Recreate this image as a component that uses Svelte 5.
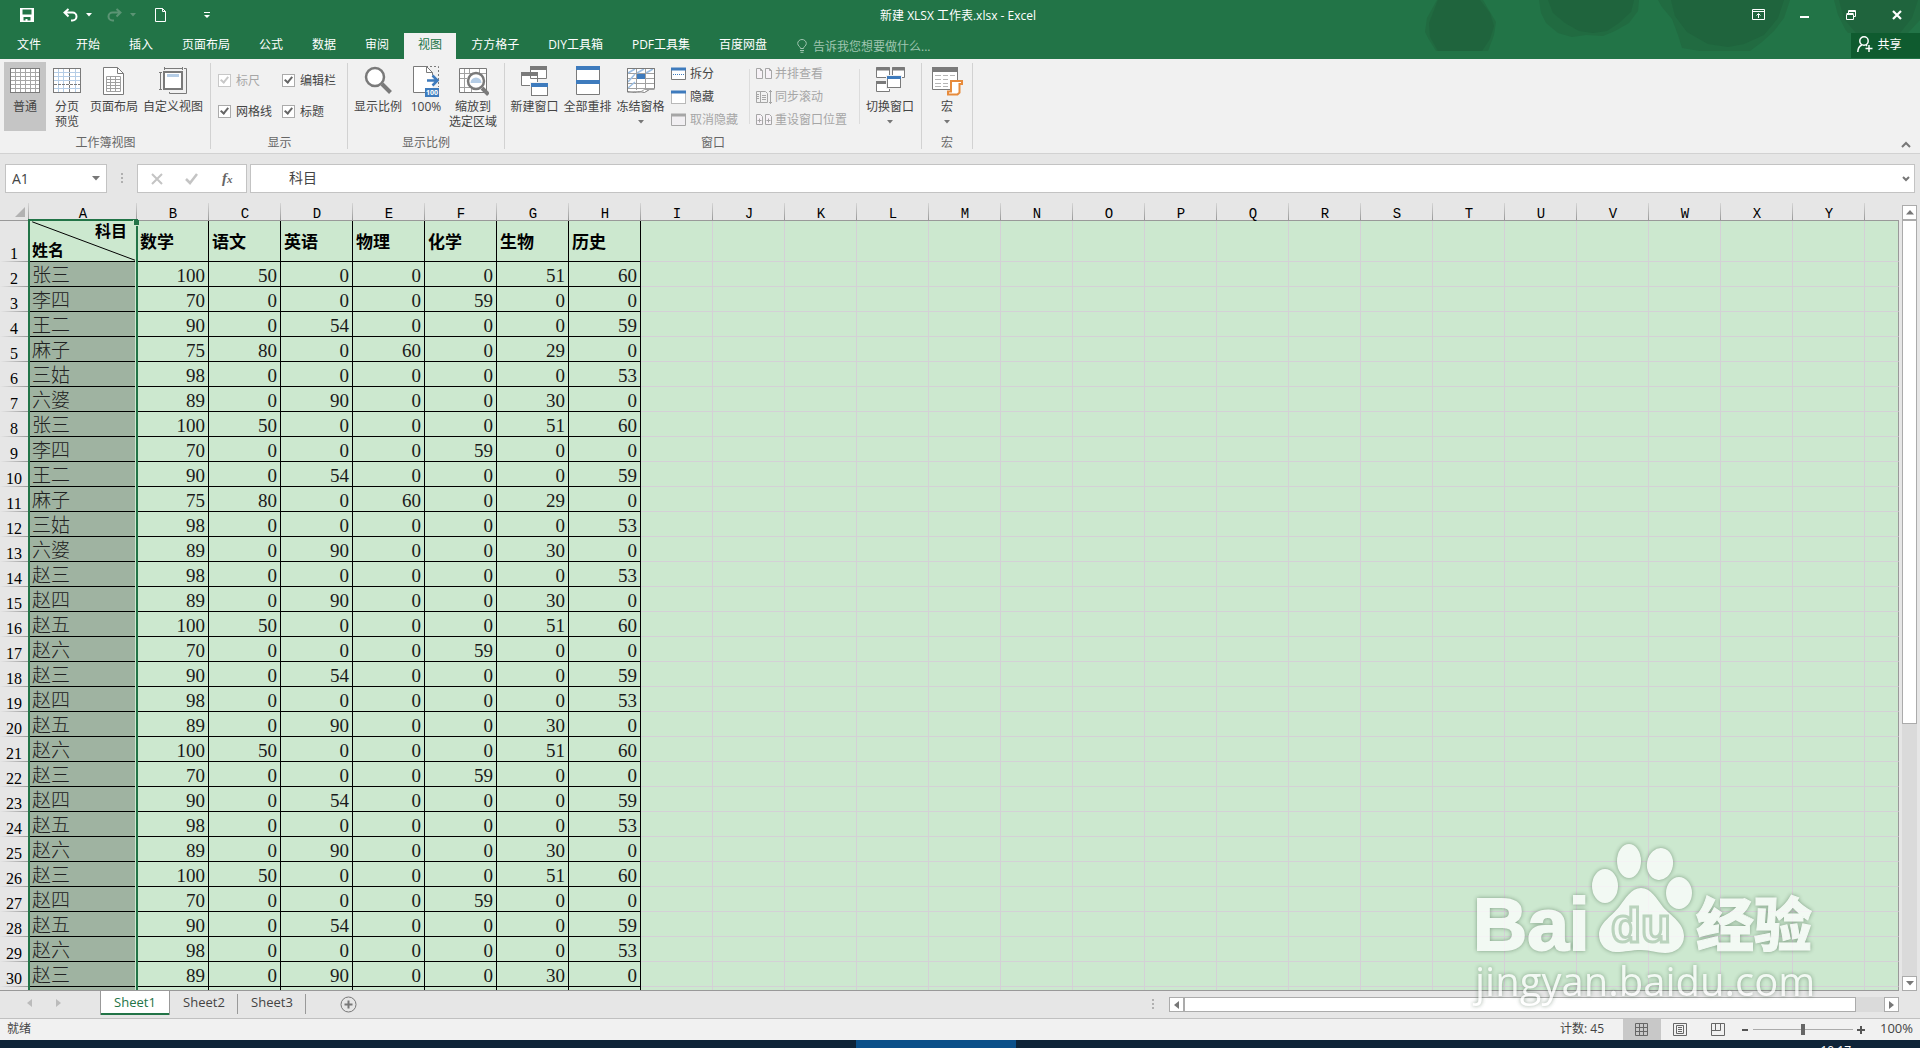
<script>
  /**
   * Spreadsheet window: title bar, "view" ribbon, formula bar, sheet,
   * sheet tabs and status bar.
   */
  const tabsBefore = ['开始', '插入', '页面布局', '公式', '数据', '审阅', '视图', '方方格子', 'DIY工具箱', 'PDF工具集', '百度网盘'];
  const sheets = ['Sheet1', 'Sheet2', 'Sheet3'];
  const columns = 'ABCDEFGHIJKLMNOPQRSTUVWXY'.split('');
  const subjects = ['数学', '语文', '英语', '物理', '化学', '生物', '历史'];

  const scores = [
    [100, 50, 0, 0, 0, 51, 60],
    [70, 0, 0, 0, 59, 0, 0],
    [90, 0, 54, 0, 0, 0, 59],
    [75, 80, 0, 60, 0, 29, 0],
    [98, 0, 0, 0, 0, 0, 53],
    [89, 0, 90, 0, 0, 30, 0],
  ];
  const names = ['张三', '李四', '王二', '麻子', '三姑', '六婆'];
  const zhao = ['赵三', '赵四', '赵五', '赵六'];
  const zhaoOrder = [4, 5, 0, 1, 2];

  const rows = [
    ...[...names, ...names].map((name, i) => ({ name, values: scores[i % 6] })),
    ...Array.from({ length: 17 }, (_, i) => ({
      name: zhao[i % 4],
      values: scores[zhaoOrder[i % 5]],
    })),
  ];

  let activeTab = $state('视图');
  let activeSheet = $state('Sheet1');
  let cellName = $state('A1');
  let formula = $state('科目');
  let zoom = $state(50);
</script>

{#snippet caret()}
  <svg class="caret" width="6" height="4" viewBox="0 0 6 4"><path d="M0 0h6L3 3.5z" fill="currentColor" /></svg>
{/snippet}

{#snippet icon(name)}
  <svg class="icon" width="32" height="32" viewBox="0 0 32 32" fill="none" stroke="#7a7a7a">
    {#if name === 'normal'}
      <rect x="1.5" y="3.5" width="29" height="24" fill="#fff" />
      <path d="M6.5 4v23M11.5 4v23M16.500 4v23M21.500 4v23M26.500 4v23M2 7.500h28M2 11.500h28M2 15.500h28M2 19.500h28M2 23.500h28" stroke="#a6a6a6" />
      <rect x="1.5" y="3.500" width="29" height="24" />
    {:else if name === 'breaks'}
      <rect x="2.5" y="3.5" width="27" height="24" fill="#fff" />
      <path d="M7.5 4v23M12.500 4v23M24.500 4v23M3 7.500h26M3 11.500h26M3 15.500h26M3 23.500h26" stroke="#b5cde6" />
      <path d="M18.500 4v23M3 19.500h26" stroke-dasharray="3 1" />
      <rect x="2.5" y="3.500" width="27" height="24" />
    {:else if name === 'layout'}
      <path d="M5.500 2.500h14l6 6v21h-20z" fill="#fff" />
      <path d="M19.500 2.500v6h6" />
      <path d="M8.500 11.500h14v15h-14zM8.500 14.500h14M8.500 17.500h14M8.500 20.500h14M8.500 23.500h14M12.500 12v14M17.500 12v14" stroke="#a0a0a0" />
    {:else if name === 'custom'}
      <path d="M7.500 3.500h18M7.500 2v3M25.500 2v3M3.500 7v17M2 7.500h3M2 24.500h3M27 3.500h2.500v25h-17V27" />
      <rect x="7" y="7" width="18" height="17" fill="#fff" stroke-width="2" />
      <path d="M10 10.500h12" stroke="#b5cde6" stroke-width="3" />
    {:else if name === 'zoom'}
      <circle cx="13" cy="12" r="9" fill="#fff" stroke-width="2.500" />
      <path d="M20 19l8.500 8.500" stroke-width="4" />
    {:else if name === 'hundred'}
      <path d="M16 1.500h12.500V22" stroke-dasharray="2 2" />
      <path d="M3.500 1.500h13l6 6v20.500h-19z" fill="#fff" stroke="none" />
      <path d="M15 27.500H3.500v-26h13l6 6v3M16.500 1.500v6h6" />
      <path d="M17 15.500h9M22.500 10.500l5 5-5 5" stroke="#3e7bbd" stroke-width="2.500" />
      <rect x="15" y="23" width="14" height="9" fill="#3e7bbd" stroke="none" />
      <text x="16" y="30" font-size="7" font-weight="700" fill="#fff" stroke="none">100</text>
    {:else if name === 'zoomsel'}
      <path d="M2.500 3.500h27v24h-27z" fill="#fff" />
      <path d="M7.500 4v23M12.500 4v5M22.500 4v5M3 8.500h26M3 13.500h7M3 22.500h10M14.500 22v5" stroke="#a0a0a0" />
      <circle cx="19" cy="16" r="8" fill="#fff" stroke-width="2.500" />
      <path d="M13.500 18a5.500 5.500 0 1 1 11 0z" fill="#b5cde6" stroke="none" />
      <path d="M25 23l6.500 6.500" stroke-width="4" />
    {:else if name === 'newwin'}
      <path d="M11.500 1.500h16v12h-16zM2.500 7.500h16v13h-16z" fill="#fff" />
      <path d="M11 3h17M2 9h17" stroke-width="4" />
      <rect x="11.500" y="17.500" width="18" height="14" fill="#fff" stroke="#f1f1f1" />
      <rect x="12.500" y="18.500" width="16" height="12" fill="#fff" />
      <path d="M12 20h17" stroke="#3e7bbd" stroke-width="4" />
    {:else if name === 'arrange'}
      <path d="M4.500 2.500h23v27h-23z" fill="#fff" />
      <path d="M4 3h24M4 17h24" stroke="#3e7bbd" stroke-width="4" />
    {:else if name === 'freeze'}
      <path d="M2.500 3.500h27v20l-5 1-5 3-5-1-5 1-7-1z" fill="#fff" />
      <path d="M2.500 8.500h27M2.500 13.500h27M2.500 18.500h27M2.500 23.500h27M11.500 4v21M20.500 4v21M2.500 27.500l8-1 4 1 5-3h10" stroke="#a0a0a0" />
      <path d="M3 8l7-4M12 8l7-4M21 8l7-4M3 17l7-8M3 23l7-6" stroke="#9dbfe3" stroke-width="1.500" />
      <rect x="12" y="9" width="8" height="5" fill="#3e7bbd" stroke="none" />
      <path d="M2.500 27v-23.500h27V23" />
    {:else if name === 'switch'}
      <path d="M2.500 2.500h13v10h-13zM18.500 2.500h12v10h-12zM2.500 16.500h13v10h-13z" fill="#fff" />
      <path d="M2 4h14M18 4h13M2 17.500h14" stroke-width="3" />
      <rect x="12.500" y="10.500" width="15" height="13" fill="#fff" stroke="#f1f1f1" />
      <rect x="13.500" y="11.500" width="13" height="11" fill="#fff" />
      <path d="M13 12.500h14" stroke="#3e7bbd" stroke-width="3" />
    {:else if name === 'macro'}
      <path d="M1.500 2.500h25v22h-25z" fill="#fff" />
      <path d="M1 4.500h26" stroke-width="5" />
      <path d="M4 10.500h6M12 10.500h5M19 10.500h5M4 14.500h6M12 14.500h5M4 18.500h6M12 18.500h5M4 21.500h6M12 21.500h5" stroke="#b5b5b5" />
      <path d="M20 16h11v3h-2.500v8.500l-2 2H17v-3h3z" fill="#fff" stroke="#e78b3c" stroke-width="2" />
    {/if}
  </svg>
{/snippet}

{#snippet smallIcon(name)}
  <svg width="16" height="16" viewBox="0 0 16 16" fill="none" stroke="currentColor">
    {#if name === 'split'}
      <path d="M.5 2.500h14v11H.5z" fill="#fff" stroke="#7a7a7a" />
      <path d="M0 3h15" stroke="#3e7bbd" stroke-width="3" />
      <path d="M2 8.500h12" stroke="#3e7bbd" stroke-dasharray="1 1" />
    {:else if name === 'hide'}
      <path d="M.5 2.500h14v12H.5z" fill="#fff" stroke="#7a7a7a" stroke-dasharray="1 1" />
      <path d="M0 3h15" stroke="#3e7bbd" stroke-width="3" />
    {:else if name === 'unhide'}
      <path d="M.5 2.500h14v11H.5z" fill="#f1eff2" />
      <path d="M0 3h15" stroke-width="3" />
    {:else if name === 'side'}
      <path d="M.5 2.500h4l2 2v8h-6zM9.500 2.500h4l2 2v8h-6zM4.500 2.500v2h2M13.500 2.500v2h2" fill="#f7f2f7" />
    {:else if name === 'sync'}
      <path d="M.5 2.500h4v11h-4zM4.500 2.500h5l2 2v9h-7zM1 5.500h2M1 7.500h2M1 9.500h2M6 6.500h4M6 8.500h4M6 10.500h4" />
      <path d="M14.500 1v14M13 2.500h3M13 13.500h3" />
    {:else if name === 'reset'}
      <path d="M.5 2.500h4l2 2v8h-6zM9.500 2.500h4l2 2v8h-6zM1.500 8.500h4M10.500 8.500h4M3.500 6.500v4M12.500 6.500v4" fill="#f7f2f7" />
    {/if}
  </svg>
{/snippet}

{#snippet big(name, lines, width, arrow, pressed)}
  <button class="big" class:pressed style="width: {width}px">
    {@render icon(name)}
    <span class="lines">
      {#each lines as line}<span>{line}</span>{/each}
    </span>
    {#if arrow}{@render caret()}{/if}
  </button>
{/snippet}

{#snippet small(name, label, disabled)}
  <button class="small" {disabled}>{@render smallIcon(name)}{label}</button>
{/snippet}

<div class="window">
  <header class="top">
    <svg class="blobs" width="520" height="51" viewBox="0 0 520 51">
      <g fill="#216b41">
        <path d="M37 0h46l7 12 6 10-2 13-6 16H36L28 38l-3-6 2-14z" />
        <path d="M139 0h100l-1 11-9 12-14 8-12 5-17-1-14 2-14-4-12-10-5-10z" />
        <path d="M258 0h132l-6 18-10 13-12 11-12 9h-50l-18-3-4-13-6-16-10-12z" />
        <path d="M434 0h86v20l-12 13h-60l-3-4-7-14z" />
      </g>
      <g fill="#1f643d">
        <path d="M38 0h42l10 13 4 13-4 13-8 12H38l-8-14-1-14z" />
        <path d="M148 0h86l-3 12-12 11-12 8-14 2-14-2-14-8-12-10z" />
        <path d="M271 0h113l-6 18-14 17-20 9-16 3-20-3-21-12-12-16z" />
        <path d="M439 0h79l-6 18-12 15h-44l-12-14z" />
      </g>
    </svg>

    <div class="titlebar">
      <div class="quick">
        <button aria-label="保存">
          <svg width="14" height="14" viewBox="0 0 14 14"><path d="M0 0h14v14H0zM2.500 1.500v5h9v-5zM3.500 9v3.500h2V11h2v1.500h3V9z" fill="#fff" fill-rule="evenodd" /></svg>
        </button>
        <button class="undo" aria-label="撤消">
          <svg width="15" height="14" viewBox="0 0 15 14" fill="none" stroke="#fff" stroke-width="2"><path d="M5.500 1L1.500 4.500l4 4M2 4.500h7.500a3.800 3.800 0 0 1 0 8H8" /></svg>
          {@render caret()}
        </button>
        <button class="undo dim" aria-label="恢复" disabled>
          <svg width="15" height="14" viewBox="0 0 15 14" fill="none" stroke="currentColor" stroke-width="2"><path d="M9.500 1l4 3.500-4 4M13 4.500H5.500a3.800 3.800 0 0 0 0 8H7" /></svg>
          {@render caret()}
        </button>
        <button class="new" aria-label="新建">
          <svg width="12" height="14" viewBox="0 0 12 14" fill="none" stroke="#fff"><path d="M.5.5h7l3 3v10H.5zM7.500.5v3h3" /></svg>
        </button>
        <button aria-label="自定义快速访问工具栏">
          <svg width="6" height="6" viewBox="0 0 6 6" fill="#fff"><path d="M0 0h6v1H0zM0 3h6L3 6z" /></svg>
        </button>
      </div>
      <span class="title">新建 XLSX 工作表.xlsx - Excel</span>
      <div class="controls">
        <button aria-label="功能区显示选项">
          <svg width="14" height="12" viewBox="0 0 14 12" fill="none" stroke="#fff"><path d="M.5.5h12v10H.5zM1 2.500h11M6.500 9V5M4.500 6.500l2-2 2 2" /></svg>
        </button>
        <button aria-label="最小化">
          <svg width="10" height="12" viewBox="0 0 10 12"><path d="M0 7h9v2H0z" fill="#fff" /></svg>
        </button>
        <button aria-label="还原">
          <svg width="10" height="10" viewBox="0 0 10 10" fill="none" stroke="#fff"><path d="M.5 4.500h7v5h-7zM.5 3.500h7M2.500 3V.5h7v6H8M2.500 1.500h7" /></svg>
        </button>
        <button aria-label="关闭">
          <svg width="10" height="10" viewBox="0 0 10 10"><path d="M1 1l8 8M9 1L1 9" stroke="#fff" stroke-width="2.200" /></svg>
        </button>
      </div>
    </div>

    <nav class="tabs">
      <button class="tab file">文件</button>
      {#each tabsBefore as t}
        <button class="tab" class:active={activeTab === t} onclick={() => (activeTab = t)}>{t}</button>
      {/each}
      <button class="tell">
        <svg width="10" height="14" viewBox="0 0 10 14" fill="none" stroke="currentColor"><path d="M3.500 9.500C3.500 7.500.7 7 .7 4.500a4.300 4 0 0 1 8.600 0c0 2.500-2.800 3-2.800 5zM3 11.500h4M3.500 13.300h3" /></svg>
        告诉我您想要做什么...
      </button>
      <button class="share">
        <svg width="16" height="17" viewBox="0 0 16 17" fill="none" stroke="#fff" stroke-width="1.500"><circle cx="7" cy="5" r="4.200" /><path d="M.8 16c0-4 2-6 4-7M9 9l1 1M8.500 12.500h7M12 9v7" /></svg>
        共享
      </button>
    </nav>
  </header>

  <section class="ribbon">
    <div class="group views">
      <div class="tools">
        {@render big('normal', ['普通'], 42, false, true)}
        {@render big('breaks', ['分页', '预览'], 42)}
        {@render big('layout', ['页面布局'], 52)}
        {@render big('custom', ['自定义视图'], 66)}
      </div>
      <div class="caption">工作簿视图</div>
    </div>
    <div class="group show">
      <div class="tools checks">
        <label class="off"><input type="checkbox" checked disabled />标尺</label>
        <label><input type="checkbox" checked />编辑栏</label>
        <label><input type="checkbox" checked />网格线</label>
        <label><input type="checkbox" checked />标题</label>
      </div>
      <div class="caption">显示</div>
    </div>
    <div class="group scale">
      <div class="tools">
        {@render big('zoom', ['显示比例'], 52)}
        {@render big('hundred', ['100%'], 44)}
        {@render big('zoomsel', ['缩放到', '选定区域'], 50)}
      </div>
      <div class="caption">显示比例</div>
    </div>
    <div class="group win">
      <div class="tools">
        {@render big('newwin', ['新建窗口'], 53)}
        {@render big('arrange', ['全部重排'], 53)}
        {@render big('freeze', ['冻结窗格'], 53, true)}
        <div class="stack">
          {@render small('split', '拆分')}
          {@render small('hide', '隐藏')}
          {@render small('unhide', '取消隐藏', true)}
        </div>
        <div class="stack lined">
          {@render small('side', '并排查看', true)}
          {@render small('sync', '同步滚动', true)}
          {@render small('reset', '重设窗口位置', true)}
        </div>
        {@render big('switch', ['切换窗口'], 60, true)}
      </div>
      <div class="caption">窗口</div>
    </div>
    <div class="group macro">
      <div class="tools">
        {@render big('macro', ['宏'], 48, true)}
      </div>
      <div class="caption">宏</div>
    </div>
    <button class="collapse" aria-label="折叠功能区">
      <svg width="10" height="7" viewBox="0 0 10 7" fill="none" stroke="#777" stroke-width="2"><path d="M1 6l4-4 4 4" /></svg>
    </button>
  </section>

  <section class="formulabar">
    <div class="namebox">
      <input aria-label="名称框" bind:value={cellName} />
      <button aria-label="选择名称"><svg width="8" height="5" viewBox="0 0 8 5"><path d="M0 0h8L4 4.500z" fill="#777" /></svg></button>
    </div>
    <svg class="grip" width="2" height="11" viewBox="0 0 2 11"><path d="M0 0h2v2H0zM0 4h2v2H0zM0 8h2v2H0z" fill="#b0b0b0" /></svg>
    <div class="fx">
      <button aria-label="取消" disabled><svg width="12" height="12" viewBox="0 0 12 12"><path d="M1 1l10 10M11 1L1 11" stroke="#c4c4c4" stroke-width="2" /></svg></button>
      <button aria-label="输入" disabled><svg width="13" height="12" viewBox="0 0 13 12" fill="none"><path d="M1 6l4 4 7-9" stroke="#c4c4c4" stroke-width="2.500" /></svg></button>
      <button aria-label="插入函数"><i>f<small>x</small></i></button>
    </div>
    <div class="formula">
      <input aria-label="编辑栏" bind:value={formula} />
      <button aria-label="展开编辑栏"><svg width="8" height="6" viewBox="0 0 8 6" fill="none"><path d="M1 1l3 3 3-3" stroke="#777" stroke-width="2" /></svg></button>
    </div>
  </section>

  <main class="sheet">
    <div class="grid">
      <table>
        <colgroup>
          <col class="c-num" />
          <col class="c-a" />
          {#each columns.slice(1) as c (c)}<col class="c-std" />{/each}
          <col />
        </colgroup>
        <thead>
          <tr>
            <th class="corner"><svg width="10" height="10" viewBox="0 0 10 10"><path d="M10 0v10H0z" fill="#b2b2b2" /></svg></th>
            {#each columns as c (c)}<th>{c}</th>{/each}
            <th class="rest"></th>
          </tr>
        </thead>
        <tbody>
          <tr class="first">
            <th>1</th>
            <td class="data split">
              <div class="halves"><b>科目</b><b>姓名</b></div>
              <svg class="slash" viewBox="0 0 100 100" preserveAspectRatio="none"><path d="M3 2L100 99" stroke="#000" vector-effect="non-scaling-stroke" /></svg>
            </td>
            {#each subjects as s}<td class="data head">{s}</td>{/each}
            {#each columns.slice(8) as c (c)}<td></td>{/each}
            <td class="rest"></td>
          </tr>
          {#each rows as row, i}
            <tr>
              <th>{i + 2}</th>
              <td class="data name">{row.name}</td>
              {#each row.values as v}<td class="data num">{v}</td>{/each}
              {#each columns.slice(8) as c (c)}<td></td>{/each}
              <td class="rest"></td>
            </tr>
          {/each}
          <tr>
            <th></th>
            <td class="data name"></td>
            {#each subjects as s}<td class="data"></td>{/each}
            {#each columns.slice(8) as c (c)}<td></td>{/each}
            <td class="rest"></td>
          </tr>
        </tbody>
      </table>
      <div class="selection"></div>
    </div>
    <div class="vscroll">
      <button aria-label="向上滚动"><svg width="8" height="5" viewBox="0 0 8 5"><path d="M0 4.500h8L4 0z" fill="#777" /></svg></button>
      <div class="vtrack"><div class="thumb"></div></div>
      <button aria-label="向下滚动"><svg width="8" height="5" viewBox="0 0 8 5"><path d="M0 0h8L4 4.500z" fill="#777" /></svg></button>
    </div>
  </main>

  <section class="sheetbar">
    <div class="navs">
      <button aria-label="上一个工作表"><svg width="5" height="8" viewBox="0 0 5 8"><path d="M5 0v8L0 4z" fill="#bbb" /></svg></button>
      <button aria-label="下一个工作表"><svg width="5" height="8" viewBox="0 0 5 8"><path d="M0 0v8l5-4z" fill="#bbb" /></svg></button>
    </div>
    {#each sheets as s}
      <button class="sheettab" class:active={activeSheet === s} onclick={() => (activeSheet = s)}>{s}</button>
    {/each}
    <button class="add" aria-label="新工作表">
      <svg width="17" height="17" viewBox="0 0 17 17" fill="none" stroke="#777"><circle cx="8.500" cy="8.500" r="7.500" /><path d="M8.500 4.500v8M4.500 8.500h8" stroke-width="2" /></svg>
    </button>
    <div class="hscroll">
      <svg class="grip" width="2" height="11" viewBox="0 0 2 11"><path d="M0 0h2v2H0zM0 4h2v2H0zM0 8h2v2H0z" fill="#b0b0b0" /></svg>
      <button aria-label="向左滚动"><svg width="5" height="8" viewBox="0 0 5 8"><path d="M5 0v8L0 4z" fill="#777" /></svg></button>
      <div class="htrack"><div class="thumb"></div></div>
      <button aria-label="向右滚动"><svg width="5" height="8" viewBox="0 0 5 8"><path d="M0 0v8l5-4z" fill="#777" /></svg></button>
    </div>
  </section>

  <footer class="status">
    <span>就绪</span>
    <span class="count">计数: 45</span>
    <button class="mode on" aria-label="普通"><svg width="14" height="14" viewBox="0 0 14 14" fill="none" stroke="#666"><path d="M.5.5h12v12H.5zM4.500.5v12M8.500.5v12M.5 4.500h12M.5 8.500h12" /></svg></button>
    <button class="mode" aria-label="页面布局"><svg width="14" height="14" viewBox="0 0 14 14" fill="none" stroke="#666"><path d="M.5.5h13v12H.5zM3.500 2.500h7v8h-7zM5 4.500h4M5 6.500h4M5 8.500h4" /></svg></button>
    <button class="mode" aria-label="分页预览"><svg width="14" height="14" viewBox="0 0 14 14" fill="none" stroke="#666"><path d="M.5.5h13v12H.5zM4.500.5v7M9.500.5v7h-9" /></svg></button>
    <button class="step" aria-label="缩小"><svg width="8" height="8" viewBox="0 0 8 8"><path d="M1 3h6v2H1z" fill="#555" /></svg></button>
    <input type="range" aria-label="缩放" min="0" max="100" bind:value={zoom} />
    <button class="step" aria-label="放大"><svg width="8" height="8" viewBox="0 0 8 8"><path d="M0 3h3V0h2v3h3v2H5v3H3V5H0z" fill="#555" /></svg></button>
    <button class="percent">100%</button>
  </footer>

  <div class="taskbar">
    <span class="running"></span>
    <time>10:17</time>
  </div>

  <svg class="watermark" width="350" height="176" viewBox="0 0 350 176">
    <g class="wm-shadow" fill="#fff">
      <text class="wm-bold" x="3" y="110" font-size="75" stroke="#fff" stroke-width="2">Bai</text>
      <ellipse cx="135" cy="46" rx="13" ry="17" />
      <ellipse cx="159" cy="21" rx="12" ry="17" />
      <ellipse cx="190" cy="24" rx="13" ry="16" transform="rotate(10 190 24)" />
      <ellipse cx="209" cy="53" rx="13" ry="16" />
      <path d="M171 48C181 48 186 58 193 67C201 76 214 83 214 96C214 107 205 113 195 113C186 113 181 110 171 110C161 110 156 112 146 112C136 112 129 104 129 95C129 83 141 77 149 67C156 58 161 48 171 48z" />
      <text class="wm-bold" x="141" y="102" font-size="49" stroke="#b4cdb8" stroke-width="3">du</text>
      <text class="wm-cjk" x="226" y="106" font-size="58" stroke="#fff" stroke-width="1">经验</text>
      <text class="wm-url" x="5" y="156" font-size="40">jingyan.baidu.com</text>
    </g>
  </svg>
</div>

<style>
  :global(body) {
    margin: 0;
    overflow: hidden;
  }
  .window {
    position: relative;
    display: flex;
    flex-direction: column;
    height: 100vh;
    background: #e6e6e6;
    color: #444;
    font: 12px/15px "Open Sans", "Noto Sans CJK SC", sans-serif;
  }
  button,
  input {
    margin: 0;
    padding: 0;
    border: 0;
    border-radius: 0;
    background: none;
    color: inherit;
    font: inherit;
  }
  button {
    display: flex;
    align-items: center;
    justify-content: center;
    white-space: nowrap;
  }
  svg {
    display: block;
    flex: none;
  }

  /* title bar and tabs */
  .top {
    position: relative;
    background: #227447;
    color: #fff;
  }
  .blobs {
    position: absolute;
    top: 0;
    right: 0;
  }
  .titlebar {
    position: relative;
    display: flex;
    height: 33px;
  }
  .quick {
    flex: 1;
    display: flex;
    align-items: center;
    padding: 0 0 4px 20px;
  }
  .undo {
    gap: 8px;
    margin-left: 29px;
  }
  .undo + .undo {
    margin-left: 15px;
  }
  .dim {
    color: #5b9474;
  }
  .new {
    margin: 0 37px 0 19px;
  }
  .title {
    margin-right: 24px;
    padding-top: 8px;
  }
  .controls {
    flex: 1;
    display: flex;
    justify-content: flex-end;
  }
  .controls button {
    width: 46px;
    height: 30px;
  }
  .tabs {
    position: relative;
    display: flex;
    height: 26px;
    gap: 1px;
  }
  .tab {
    padding: 0 14px 3px;
  }
  .tab.file {
    padding: 0 17px 3px;
    margin-right: 3px;
  }
  .tab.active {
    background: #f1f1f1;
    color: #227447;
  }
  .tell {
    gap: 6px;
    padding-left: 15px;
    color: #9fc5b0;
  }
  .share {
    gap: 4px;
    width: 69px;
    height: 25px;
    margin-left: auto;
    padding: 0 12px 3px 0;
    background: #0f5b2f;
  }

  /* ribbon */
  .ribbon {
    display: flex;
    height: 94px;
    background: #f1f1f1;
    border-bottom: 1px solid #d2d2d2;
  }
  .group {
    position: relative;
    display: flex;
    flex-direction: column;
    box-sizing: border-box;
    padding-top: 3px;
  }
  .group::after {
    content: "";
    position: absolute;
    top: 4px;
    bottom: 4px;
    right: 0;
    width: 1px;
    background: #d2d2d2;
  }
  .views {
    width: 211px;
    padding-left: 4px;
    padding-right: 4px;
  }
  .show {
    width: 137px;
  }
  .scale {
    width: 157px;
    padding: 3px 5px 0 4px;
  }
  .win {
    width: 417px;
    padding: 3px 4px 0 3px;
  }
  .macro {
    width: 51px;
    padding: 3px 2px 0 1px;
  }
  .tools {
    display: flex;
    height: 69px;
  }
  .caption {
    padding-top: 4px;
    text-align: center;
    color: #666;
  }
  .big {
    flex: none;
    flex-direction: column;
    justify-content: flex-start;
    box-sizing: border-box;
    height: 69px;
    padding-top: 3px;
  }
  .pressed {
    background: #c5c5c5;
  }
  .lines {
    display: flex;
    flex-direction: column;
    margin-top: 2px;
  }
  .big .caret {
    margin-top: 6px;
    color: #777;
  }
  .checks {
    display: grid;
    grid-template-columns: 64px 64px;
    grid-template-rows: 31px 31px;
    padding: 3px 0 0 7px;
    height: 66px;
  }
  .checks label {
    display: flex;
    align-items: center;
    gap: 5px;
    white-space: nowrap;
  }
  .off {
    color: #a6a6a6;
  }
  .checks input {
    appearance: none;
    box-sizing: border-box;
    width: 13px;
    height: 13px;
    border: 1px solid #ababab;
    background: #fff;
  }
  .checks input:checked::after {
    content: "";
    display: block;
    box-sizing: border-box;
    width: 5px;
    height: 8px;
    margin: 0 3px;
    border: solid #666;
    border-width: 0 2px 2px 0;
    transform: rotate(40deg);
  }
  .checks input:disabled {
    border-color: #c8c8c8;
  }
  .checks input:disabled::after {
    border-color: #c8c8c8;
  }
  .stack {
    display: flex;
    flex: none;
    flex-direction: column;
    align-items: flex-start;
    box-sizing: border-box;
    width: 82px;
    padding-left: 4px;
  }
  .lined {
    width: 111px;
    height: 62px;
    padding-left: 7px;
    position: relative;
  }
  .lined::before,
  .lined::after {
    content: "";
    position: absolute;
    top: 7px;
    bottom: 0;
    left: 0;
    width: 1px;
    background: #dcdcdc;
  }
  .lined::after {
    right: 0;
    left: auto;
  }
  .small {
    flex: none;
    gap: 3px;
    height: 23px;
  }
  .small:disabled {
    color: #a6a6a6;
  }
  .collapse {
    align-self: flex-end;
    width: 20px;
    height: 17px;
    margin: 0 4px 0 auto;
  }

  /* formula bar */
  .formulabar {
    display: flex;
    align-items: center;
    padding: 10px 5px;
    font-size: 14px;
  }
  .namebox,
  .fx,
  .formula {
    display: flex;
    box-sizing: border-box;
    height: 29px;
    border: 1px solid #c3c3c3;
    background: #fff;
  }
  .namebox {
    width: 102px;
  }
  .namebox input {
    flex: 1;
    min-width: 0;
    padding-left: 6px;
  }
  .namebox button {
    width: 20px;
  }
  .formulabar .grip {
    margin: 0 14px;
  }
  .fx {
    width: 110px;
    padding: 0 1px;
  }
  .fx button {
    flex: 1;
  }
  .fx i {
    color: #666;
    font: italic 700 15px "Liberation Serif", serif;
  }
  .fx small {
    font-size: 11px;
  }
  .formula {
    flex: 1;
    margin-left: 3px;
  }
  .formula input {
    flex: 1;
    min-width: 0;
    padding: 0 0 2px 38px;
  }
  .formula button {
    width: 17px;
  }

  /* sheet */
  .sheet {
    flex: 1;
    display: flex;
    min-height: 0;
  }
  .grid {
    position: relative;
    flex: 1;
    min-width: 0;
    overflow: hidden;
    border-bottom: 1px solid #999;
  }
  table {
    width: 100%;
    table-layout: fixed;
    border-collapse: separate;
    border-spacing: 0;
    color: #000;
    font: 19px/21px "Liberation Serif", "Noto Sans CJK SC", serif;
  }
  .c-num {
    width: 29px;
  }
  .c-a {
    width: 108px;
  }
  .c-std {
    width: 72px;
  }
  th,
  td {
    box-sizing: border-box;
    height: 25px;
    padding: 0;
    vertical-align: bottom;
    white-space: nowrap;
  }
  th {
    background: linear-gradient(90deg, #e6e6e6, #999) bottom / 100% 1px no-repeat;
    border-right: 1px solid #999;
    font-weight: 400;
    font-size: 16px;
    line-height: 17px;
  }
  thead th {
    height: 18px;
    border-right: 0;
    border-bottom: 1px solid #999;
    background: linear-gradient(#d6d6d6, #999) right / 1px 100% no-repeat;
    font-family: "Liberation Mono", monospace;
    font-size: 14px;
    line-height: 12px;
  }
  .corner svg {
    margin: 0 0 3px 15px;
  }
  thead .rest {
    background: none;
  }
  td {
    background: #cce8cf;
    border: solid #d4d0d6;
    border-width: 0 1px 1px 0;
  }
  td.rest {
    border-right-color: #999;
  }
  .data {
    border-color: #000;
  }
  .first th,
  .first td {
    height: 41px;
  }
  .first .head {
    padding: 2px 0 0 3px;
    vertical-align: middle;
    font-size: 17px;
    font-weight: 700;
  }
  .split {
    position: relative;
  }
  .halves {
    display: flex;
    flex-direction: column;
    justify-content: space-between;
    box-sizing: border-box;
    height: 40px;
    padding: 2px 9px 1px 3px;
    font-size: 16px;
    line-height: 18px;
  }
  .halves b:first-child {
    align-self: flex-end;
  }
  .slash {
    position: absolute;
    inset: 0;
    width: 100%;
    height: 100%;
  }
  .name {
    padding-left: 3px;
    background: #9fb3a1;
    color: #222;
    font-weight: 300;
  }
  .num {
    padding-right: 3px;
    text-align: right;
    color: #1a1a1a;
  }
  .selection {
    position: absolute;
    top: 16px;
    left: 28px;
    bottom: -4px;
    width: 106px;
    border: 2px solid #227447;
    box-shadow: inset -1px 0 #cce8cf;
  }
  .selection::after {
    content: "";
    position: absolute;
    top: -1px;
    right: -3px;
    width: 5px;
    height: 5px;
    background: #227447;
    border: solid #cce8cf;
    border-width: 0 0 1px 1px;
  }

  /* scroll bars */
  .vscroll {
    display: flex;
    flex-direction: column;
    width: 15px;
    margin: 2px 3px 0;
  }
  .vscroll button,
  .hscroll button {
    flex: none;
    box-sizing: border-box;
    width: 15px;
    height: 15px;
    border: 1px solid #ababab;
    background: #fff;
  }
  .vtrack {
    flex: 1;
    background: #dadada;
  }
  .thumb {
    box-sizing: border-box;
    border: 1px solid #ababab;
    background: #fff;
  }
  .vtrack .thumb {
    height: 66.7%;
  }
  .sheetbar {
    display: flex;
    height: 27px;
    border-bottom: 1px solid #c0c0c0;
    font-size: 13px;
  }
  .navs {
    display: flex;
    width: 100px;
    padding-left: 15px;
    box-sizing: border-box;
  }
  .navs button {
    width: 29px;
    height: 24px;
  }
  .sheettab {
    position: relative;
    width: 68px;
    height: 24px;
    padding-bottom: 2px;
  }
  .sheettab::after {
    content: "";
    position: absolute;
    top: 3px;
    right: 0;
    width: 1px;
    height: 20px;
    background: #999;
  }
  .sheettab.active {
    box-sizing: border-box;
    width: 70px;
    border: solid #999;
    border-width: 0 1px;
    background: #fff;
    box-shadow: inset 0 -2px #227447;
    color: #227447;
  }
  .sheettab.active::after {
    display: none;
  }
  .add {
    width: 84px;
    height: 26px;
  }
  .hscroll {
    display: flex;
    align-items: center;
    width: 747px;
    height: 27px;
    margin: 0 21px 0 auto;
  }
  .hscroll .grip {
    margin-right: 15px;
  }
  .htrack {
    flex: 1;
    height: 15px;
    background: #dadada;
  }
  .htrack .thumb {
    width: 96%;
    height: 15px;
  }

  /* status bar */
  .status {
    display: flex;
    align-items: center;
    height: 21px;
    padding: 0 7px;
    background: #f1f1f1;
  }
  .status span,
  .percent {
    padding-bottom: 2px;
  }
  .count {
    margin: 0 19px 0 auto;
  }
  .mode {
    width: 38px;
    height: 21px;
  }
  .mode.on {
    background: #c8c8c8;
  }
  .step {
    width: 16px;
    height: 21px;
  }
  .status input {
    appearance: none;
    width: 100px;
    height: 11px;
    background: linear-gradient(#ababab, #ababab) center / 100% 1px no-repeat;
  }
  .status input::-webkit-slider-thumb {
    appearance: none;
    width: 4px;
    height: 11px;
    background: #666;
  }
  .percent {
    width: 44px;
    justify-content: flex-end;
    font-size: 13px;
  }

  .taskbar {
    display: flex;
    justify-content: space-between;
    height: 8px;
    overflow: hidden;
    background: #0e2438;
    color: #fff;
  }
  .running {
    width: 160px;
    margin-left: 856px;
    background: #0b5089;
  }
  .taskbar time {
    padding: 3px 69px 0 0;
  }

  .watermark {
    position: absolute;
    right: 100px;
    bottom: 32px;
    pointer-events: none;
    opacity: 0.75;
  }
  .wm-shadow {
    filter: drop-shadow(0 0 2px rgb(60 90 65 / 0.7));
  }
  .wm-bold {
    font-family: "Liberation Sans", sans-serif;
    font-weight: 700;
  }
  .wm-cjk {
    font-family: "Noto Sans CJK SC", sans-serif;
    font-weight: 900;
  }
  .wm-url {
    font-family: "Open Sans", sans-serif;
  }
</style>
